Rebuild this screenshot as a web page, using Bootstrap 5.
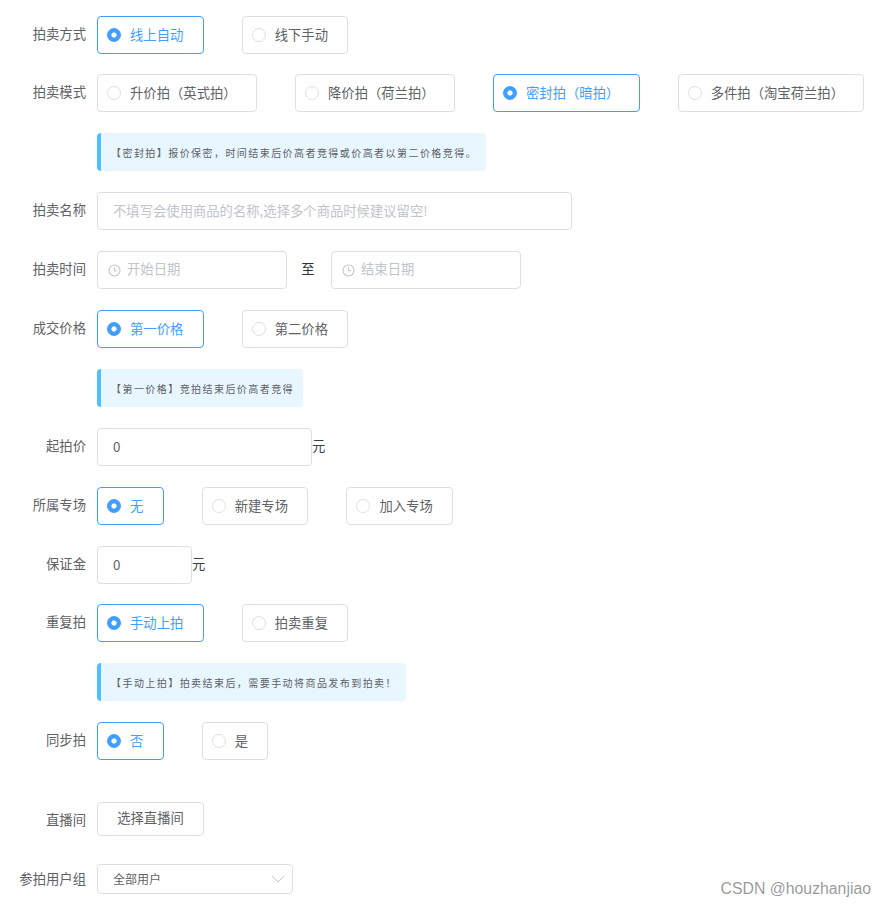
<!DOCTYPE html>
<html lang="zh">
<head>
<meta charset="utf-8">
<title>拍卖</title>
<link rel="stylesheet" href="https://cdn.jsdelivr.net/npm/bootstrap@5.3.0/dist/css/bootstrap.min.css">
<style>
html,body{height:908px;overflow:hidden;background:#fff}
body{font-family:"Noto Sans CJK SC","Liberation Sans",sans-serif;font-size:13.33px;color:#606266;position:relative}
.sheet{padding-top:16px;display:flex;flex-direction:column;gap:21px}
.line{display:flex;align-items:flex-start;min-height:38px}
.snug{margin-top:-1px}
.cap{width:86px;margin:0 11px 0 0;flex:none;text-align:right;line-height:36px;font-size:13.33px;color:#606266}
.opts{display:flex;gap:38px}
.opt{display:flex;align-items:center;gap:9px;height:38px;margin:0;padding:0 19.4px 1px 9px;border:1px solid #dcdfe6;border-radius:4px;color:#606266;line-height:1}
.opt.on{border-color:#409eff;color:#409eff}
.opt .form-check-input{width:14px;height:14px;margin:0;flex:none;border:1px solid #dcdfe6;background:#fff;box-shadow:none}
.opt .form-check-input:checked{border-color:#409eff;background:radial-gradient(circle,#fff 2.2px,#409eff 3px)}
.tip{margin-left:97px;height:38px;width:max-content;display:flex;align-items:center;padding:0 9px 0 10px;background:#e8f6ff;border-left:4px solid #50bfff;border-radius:4px;font-size:10px;letter-spacing:1.44px;color:#5e6066}
.field.form-control{height:38px;padding:0 15px 2px;border-color:#dcdfe6;border-radius:4px;font-size:13.33px;color:#606266;box-shadow:none}
.field.form-control::placeholder{color:#c0c4cc;opacity:1}
.w-name{width:475px}.w-start{width:215px}.w-deposit{width:95px}
.unit{line-height:36px;color:#3b4045}
.datebox{width:190px;height:38px;gap:6px;padding:0 10px;border:1px solid #dcdfe6;border-radius:4px}
.datebox input{border:0;outline:0;padding:0 0 2px;flex:1;min-width:0;font-size:13.33px;background:none}
.datebox input::placeholder{color:#c0c4cc;opacity:1}
.to{width:44px;padding-right:2px;text-align:center;line-height:36px;color:#303133}
.gobtn.btn{width:107px;height:34px;padding:0 0 2px;border:1px solid #dcdfe6;border-radius:4px;font-size:13.33px;color:#606266;background:#fff}
.pick.form-select{width:196px;height:30px;padding:0 30px 0 15px;border-color:#dcdfe6;border-radius:4px;font-size:12px;color:#606266;box-shadow:none;background-size:14px 8px;background-position:right 7px center;background-image:url("data:image/svg+xml,%3Csvg xmlns='http://www.w3.org/2000/svg' viewBox='0 0 14 8'%3E%3Cpath d='M1 1l6 6 6-6' fill='none' stroke='%23c0c4cc' stroke-width='1'/%3E%3C/svg%3E")}
.live{margin-top:21px}
.usergroup{margin-top:3px}
.usergroup .cap{line-height:30px}
.mark-wm{position:absolute;right:15px;top:880px;font-family:"Liberation Sans",sans-serif;font-size:15.8px;line-height:18px;color:rgba(120,120,120,.75)}
</style>
</head>
<body>
<form class="sheet">
  <div class="line"><div class="cap">拍卖方式</div><div class="opts">
    <label class="opt on"><input class="form-check-input" type="radio" name="a" checked>线上自动</label>
    <label class="opt"><input class="form-check-input" type="radio" name="a">线下手动</label>
  </div></div>
  <div class="line snug"><div class="cap">拍卖模式</div><div class="opts">
    <label class="opt"><input class="form-check-input" type="radio" name="b">升价拍（英式拍）</label>
    <label class="opt"><input class="form-check-input" type="radio" name="b">降价拍（荷兰拍）</label>
    <label class="opt on"><input class="form-check-input" type="radio" name="b" checked>密封拍（暗拍）</label>
    <label class="opt"><input class="form-check-input" type="radio" name="b">多件拍（淘宝荷兰拍）</label>
  </div></div>
  <div class="tip">【密封拍】报价保密，时间结束后价高者竞得或价高者以第二价格竞得。</div>
  <div class="line"><div class="cap">拍卖名称</div><input class="form-control field w-name" type="text" placeholder="不填写会使用商品的名称,选择多个商品时候建议留空!"></div>
  <div class="line"><div class="cap">拍卖时间</div>
    <div class="datebox d-flex align-items-center">
      <svg width="13" height="13" viewBox="0 0 13 13" fill="none" stroke="#c0c4cc" stroke-width="1.1"><circle cx="6.5" cy="6.5" r="5.5"/><path d="M6.5 3.2v3.5h2.8"/></svg>
      <input type="text" placeholder="开始日期">
    </div>
    <div class="to">至</div>
    <div class="datebox d-flex align-items-center">
      <svg width="13" height="13" viewBox="0 0 13 13" fill="none" stroke="#c0c4cc" stroke-width="1.1"><circle cx="6.5" cy="6.5" r="5.5"/><path d="M6.5 3.2v3.5h2.8"/></svg>
      <input type="text" placeholder="结束日期">
    </div>
  </div>
  <div class="line"><div class="cap">成交价格</div><div class="opts">
    <label class="opt on"><input class="form-check-input" type="radio" name="c" checked>第一价格</label>
    <label class="opt"><input class="form-check-input" type="radio" name="c">第二价格</label>
  </div></div>
  <div class="tip">【第一价格】竞拍结束后价高者竞得</div>
  <div class="line"><div class="cap">起拍价</div><input class="form-control field w-start" type="text" value="0"><span class="unit">元</span></div>
  <div class="line"><div class="cap">所属专场</div><div class="opts">
    <label class="opt on"><input class="form-check-input" type="radio" name="d" checked>无</label>
    <label class="opt"><input class="form-check-input" type="radio" name="d">新建专场</label>
    <label class="opt"><input class="form-check-input" type="radio" name="d">加入专场</label>
  </div></div>
  <div class="line"><div class="cap">保证金</div><input class="form-control field w-deposit" type="text" value="0"><span class="unit">元</span></div>
  <div class="line snug"><div class="cap">重复拍</div><div class="opts">
    <label class="opt on"><input class="form-check-input" type="radio" name="e" checked>手动上拍</label>
    <label class="opt"><input class="form-check-input" type="radio" name="e">拍卖重复</label>
  </div></div>
  <div class="tip">【手动上拍】拍卖结束后，需要手动将商品发布到拍卖！</div>
  <div class="line"><div class="cap">同步拍</div><div class="opts">
    <label class="opt on"><input class="form-check-input" type="radio" name="f" checked>否</label>
    <label class="opt"><input class="form-check-input" type="radio" name="f">是</label>
  </div></div>
  <div class="line live"><div class="cap">直播间</div><button type="button" class="btn gobtn">选择直播间</button></div>
  <div class="line usergroup"><div class="cap">参拍用户组</div><select class="form-select pick"><option>全部用户</option></select></div>
</form>
<div class="mark-wm">CSDN @houzhanjiao</div>
<script src="https://cdn.jsdelivr.net/npm/bootstrap@5.3.0/dist/js/bootstrap.bundle.min.js"></script>
</body>
</html>
